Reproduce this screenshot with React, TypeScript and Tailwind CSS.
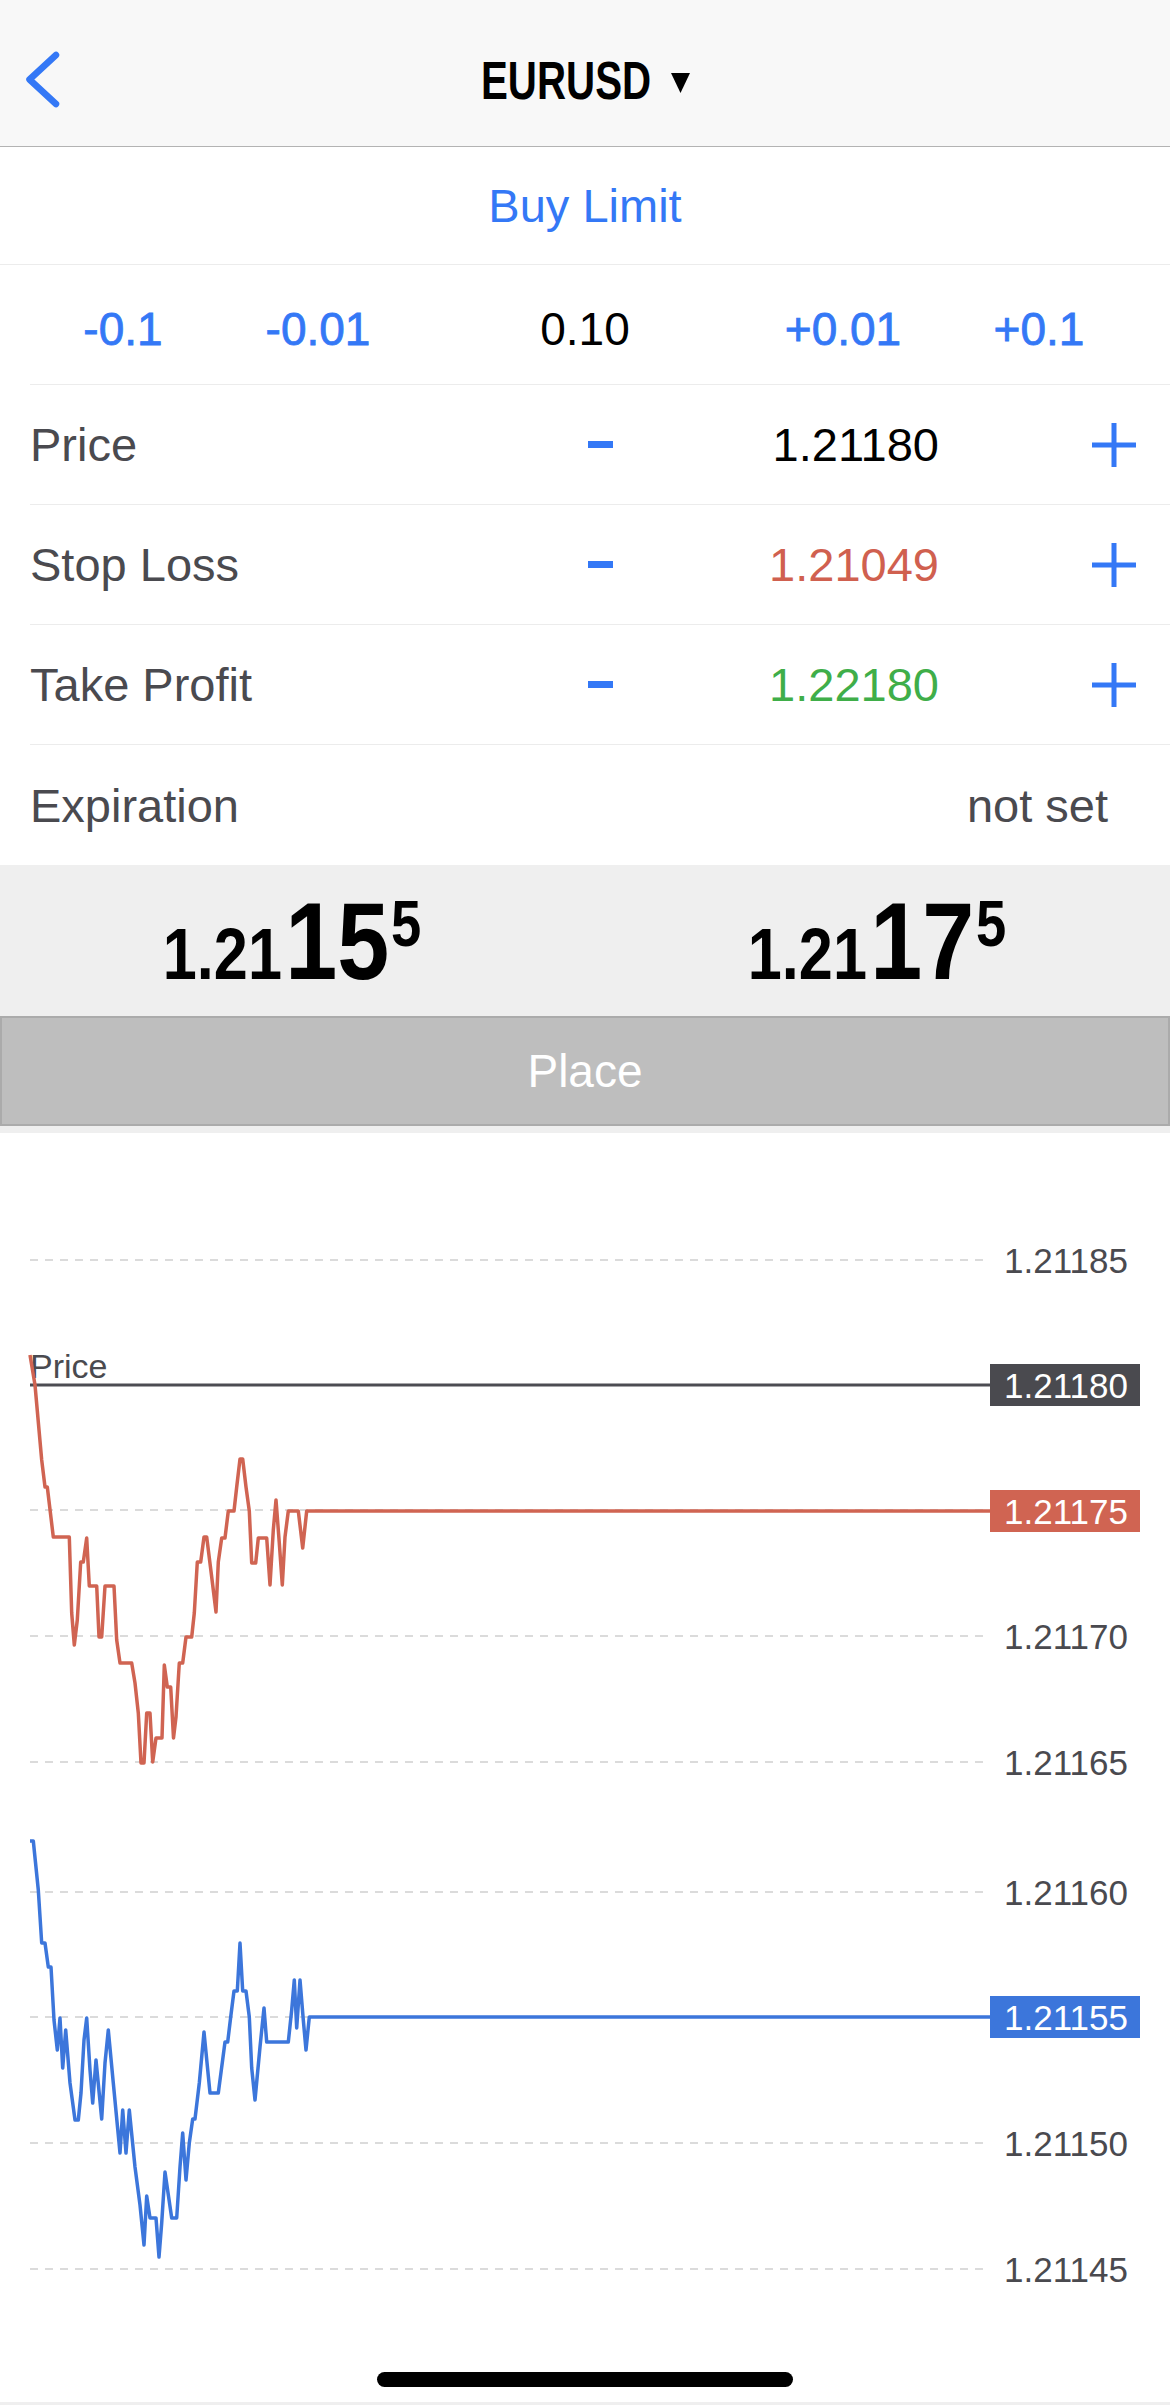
import React from "react";

const BLUE = "#3478f6";

const redPts: [number, number][] = [
  [30, 1355], [35, 1385], [41.7, 1460], [45, 1487], [47.3, 1487], [53.3, 1537], [69.3, 1537],
  [71.7, 1613], [74.3, 1645], [77.3, 1620], [80.7, 1562], [83.3, 1562], [86.7, 1538],
  [89.3, 1586], [96.7, 1586], [99, 1637], [101.7, 1637], [105, 1586], [114, 1586],
  [116.7, 1640], [120, 1663], [131.7, 1663], [135, 1683], [138.3, 1713], [141, 1763],
  [144, 1763], [146.7, 1713], [150, 1713], [152.7, 1762], [156, 1738], [162, 1738],
  [164.3, 1665], [167.3, 1687], [170.7, 1687], [173.5, 1738], [176, 1717], [179.3, 1663],
  [182.7, 1663], [186, 1637], [191.7, 1637], [194.3, 1613], [197.3, 1562], [200.7, 1562],
  [204, 1537], [206.7, 1537], [211.7, 1577], [216, 1612], [218.3, 1562], [221.7, 1538],
  [225, 1538], [228.3, 1511], [234, 1511], [236.7, 1487], [240, 1459], [242.7, 1459],
  [246, 1487], [249.3, 1511], [251.7, 1563], [255.7, 1563], [258.3, 1538], [266.7, 1538],
  [270, 1585], [273.3, 1530], [276, 1500], [279.3, 1543], [282.3, 1585], [285, 1537],
  [288.3, 1511], [298.3, 1511], [302.7, 1548], [306.7, 1511], [990, 1511],
];

const bluePts: [number, number][] = [
  [30, 1841], [33.3, 1841], [38.3, 1890], [41.7, 1943], [45, 1943], [48.3, 1967], [51, 1967],
  [54, 2020], [57.3, 2050], [60, 2018], [62.7, 2068], [65.7, 2030], [70, 2083], [75, 2120],
  [78.3, 2120], [81, 2093], [84, 2040], [86.7, 2018], [90, 2070], [92.7, 2103], [96, 2060],
  [101.7, 2119], [105, 2063], [108.3, 2030], [113.3, 2083], [120, 2153], [122.7, 2110],
  [126, 2153], [129.3, 2110], [135, 2167], [140, 2205], [144, 2245], [146.7, 2196],
  [150, 2218], [156, 2218], [159, 2257], [161.7, 2223], [165, 2172], [171.7, 2218],
  [176.7, 2218], [180, 2167], [182.7, 2133], [186, 2180], [189.3, 2143], [192.7, 2119],
  [195, 2119], [199.3, 2083], [204, 2032], [210, 2093], [218.3, 2093], [225, 2042],
  [227.7, 2042], [230.7, 2017], [234, 1991], [237.3, 1991], [240, 1943], [242.7, 1991],
  [246, 1991], [249.3, 2017], [251.7, 2068], [255, 2100], [260, 2047], [264, 2008],
  [266.7, 2042], [288.3, 2042], [291.7, 2010], [294.3, 1980], [296.7, 2028], [300, 1980],
  [303.3, 2020], [306, 2050], [309.3, 2017], [990, 2017],
];

const grid = [
  { y: 1260, label: "1.21185" },
  { y: 1510, label: "1.21175" },
  { y: 1636, label: "1.21170" },
  { y: 1762, label: "1.21165" },
  { y: 1892, label: "1.21160" },
  { y: 2017, label: "1.21155" },
  { y: 2143, label: "1.21150" },
  { y: 2269, label: "1.21145" },
];

const toPoints = (p: [number, number][]) => p.map(([x, y]) => `${x},${y}`).join(" ");

function Minus() {
  return <div className="w-[25px] h-[7px] bg-[#3478f6]" />;
}

function Plus() {
  return (
    <svg width="44" height="44" viewBox="0 0 44 44">
      <path d="M22 0 V44 M0 22 H44" stroke={BLUE} strokeWidth="5" />
    </svg>
  );
}

function StepRow({ label, value, color }: { label: string; value: string; color: string }) {
  return (
    <div className="pl-[30px]">
      <div className="h-[120px] border-b border-[#ececec] flex items-center">
        <div className="w-[530px] text-[47px] text-[#4a4a4f]">{label}</div>
        <div className="w-[80px] flex justify-center">
          <Minus />
        </div>
        <div className={`w-[299px] text-right text-[47px] ${color}`}>{value}</div>
        <div className="ml-[135px] w-[80px] flex justify-center">
          <Plus />
        </div>
      </div>
    </div>
  );
}

function Quote({ head, big, tail }: { head: string; big: string; tail: string }) {
  return (
    <div className="flex justify-center">
      <div className="flex items-baseline font-bold text-black scale-x-[0.85] leading-none">
        <span className="text-[72px]">{head}</span>
        <span className="text-[110px] ml-[4px]">{big}</span>
        <span className="text-[64px] self-start mt-[6px] ml-[2px]">{tail}</span>
      </div>
    </div>
  );
}

export default function App() {
  return (
    <div className="w-[1170px] bg-white font-['Liberation_Sans',Arial,sans-serif] leading-none">
      {/* nav bar */}
      <div className="h-[147px] bg-[#f8f8f8] border-b border-[#b3b3b3] grid grid-cols-[1fr_auto_1fr] items-center pt-[14px]">
        <div className="pl-[20px]">
          <svg width="44" height="64" viewBox="0 0 44 64">
            <polyline points="36,7 9.5,31.5 36,56" fill="none" stroke={BLUE} strokeWidth="6.5" strokeLinecap="round" strokeLinejoin="round" />
          </svg>
        </div>
        <div className="flex items-center">
          <span className="inline-block w-[168px]">
            <span className="inline-block origin-left scale-x-[0.76] whitespace-nowrap text-[53px] font-bold text-black">EURUSD</span>
          </span>
          <svg className="ml-[22px] mt-[6px]" width="19" height="20" viewBox="0 0 19 20">
            <polygon points="0,0 19,0 9.5,20" fill="#000" />
          </svg>
        </div>
        <div />
      </div>

      {/* order type */}
      <div className="h-[118px] border-b border-[#ececec] flex items-center justify-center text-[47px] text-[#3478f6]">
        Buy Limit
      </div>

      {/* volume */}
      <div className="pl-[30px]">
        <div className="h-[120px] border-b border-[#ececec] grid grid-cols-[186px_204px_330px_186px_206px] items-center pt-[8px] text-[46px]">
          <div className="text-center text-[#3478f6] [-webkit-text-stroke:0.8px_#3478f6]">-0.1</div>
          <div className="text-center text-[#3478f6] [-webkit-text-stroke:0.8px_#3478f6]">-0.01</div>
          <div className="text-center text-black">0.10</div>
          <div className="text-center text-[#3478f6] [-webkit-text-stroke:0.8px_#3478f6]">+0.01</div>
          <div className="text-center text-[#3478f6] [-webkit-text-stroke:0.8px_#3478f6]">+0.1</div>
        </div>
      </div>

      <StepRow label="Price" value="1.21180" color="text-black" />
      <StepRow label="Stop Loss" value="1.21049" color="text-[#d0604f]" />
      <StepRow label="Take Profit" value="1.22180" color="text-[#3fae49]" />

      <div className="h-[120px] flex items-center justify-between pl-[30px] pr-[62px] text-[47px] text-[#4a4a4f]">
        <span>Expiration</span>
        <span>not set</span>
      </div>

      {/* quotes */}
      <div className="h-[151px] bg-[#efefef] grid grid-cols-2 items-center">
        <Quote head="1.21" big="15" tail="5" />
        <Quote head="1.21" big="17" tail="5" />
      </div>

      <div className="h-[110px] bg-[#bebebe] border-2 border-[#ababab] flex items-center justify-center text-[46px] text-white">
        Place
      </div>
      <div className="h-[7px] bg-[#efefef]" />

      {/* chart */}
      <svg width="1170" height="1229" viewBox="0 1133 1170 1229" className="block" fontFamily="Liberation Sans, Arial, sans-serif">
        {grid.map((g) => (
          <line key={g.y} x1="30" x2="985" y1={g.y} y2={g.y} stroke="#cfcfcf" strokeWidth="1.5" strokeDasharray="8 7" />
        ))}
        {grid
          .filter((g) => g.label !== "1.21175" && g.label !== "1.21155")
          .map((g) => (
            <text key={g.label} x="1128" y={g.y + 12.5} textAnchor="end" fontSize="35" fill="#4a4a4f">
              {g.label}
            </text>
          ))}

        <text x="30" y="1378" fontSize="34" fill="#4a4a4f">Price</text>
        <line x1="30" x2="990" y1="1385" y2="1385" stroke="#4c4c52" strokeWidth="3" />
        <rect x="990" y="1364" width="150" height="42" fill="#4a4a4f" />
        <text x="1128" y="1397.5" textAnchor="end" fontSize="35" fill="#fff">1.21180</text>

        <polyline points={toPoints(redPts)} fill="none" stroke="#d06452" strokeWidth="3.5" strokeLinejoin="round" />
        <rect x="990" y="1490" width="150" height="42" fill="#d06452" />
        <text x="1128" y="1523.5" textAnchor="end" fontSize="35" fill="#fff">1.21175</text>

        <polyline points={toPoints(bluePts)} fill="none" stroke="#3c76db" strokeWidth="3.5" strokeLinejoin="round" />
        <rect x="990" y="1996" width="150" height="42" fill="#3c76db" />
        <text x="1128" y="2029.5" textAnchor="end" fontSize="35" fill="#fff">1.21155</text>
      </svg>

      <div className="pt-[10px] pb-[15px]">
        <div className="mx-auto w-[416px] h-[15px] rounded-full bg-black" />
      </div>
      <div className="h-[3px] bg-[#efefef]" />
    </div>
  );
}
